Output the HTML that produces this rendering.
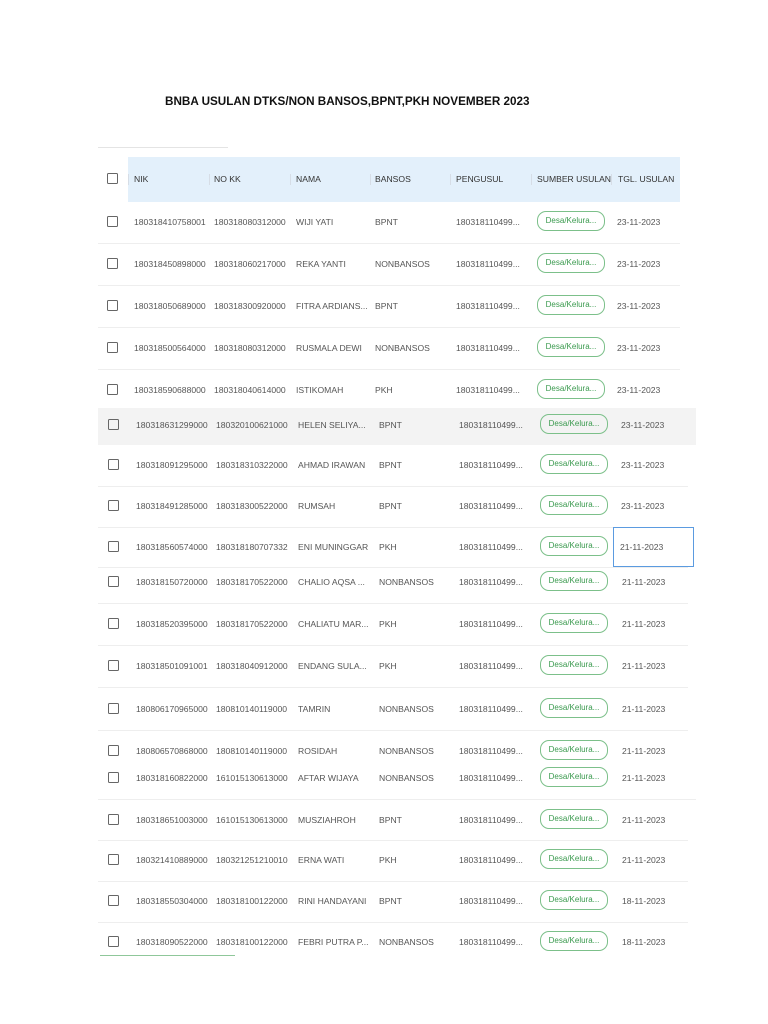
<!DOCTYPE html>
<html><head><meta charset="utf-8"><style>
body{margin:0;width:768px;height:1024px;background:#fff;position:relative;font-family:"Liberation Sans",sans-serif;overflow:hidden}
.t{position:absolute;left:165px;top:95px;font-size:11.7px;font-weight:bold;color:#111}
.hd{position:absolute;left:128px;top:157px;width:552px;height:45px;background:#e3f0fb}
.r{position:absolute;left:0;width:768px;height:16px;font-size:8.6px;color:#555;line-height:16px}
.r span{position:absolute;top:0;white-space:nowrap;overflow:hidden}
.cb{position:absolute;top:2px;width:9px;height:9px;border:1.5px solid #666;border-radius:1.5px}
.p{position:absolute;top:-3px;height:18px;width:66px;border:1px solid #7cc08a;border-radius:9px;color:#3a9a4e;text-align:center;line-height:18px;font-size:8px}
.ln{position:absolute;height:1px;background:#eee}
.h span{color:#333;font-size:8.6px}
.sep{position:absolute;top:3px;width:1px;height:11px;background:#d6dde6}
</style></head><body>
<div class="t">BNBA USULAN DTKS/NON BANSOS,BPNT,PKH NOVEMBER 2023</div>
<div class="ln" style="left:98px;top:147px;width:130px;background:#e4e4e4"></div>
<div class="hd"></div>
<div class="r h" style="top:171px"><div class="cb" style="left:107px"></div>
<div class="sep" style="left:128px"></div><span style="left:134px">NIK</span>
<div class="sep" style="left:209px"></div><span style="left:214px">NO KK</span>
<div class="sep" style="left:290px"></div><span style="left:296px">NAMA</span>
<div class="sep" style="left:370px"></div><span style="left:375px">BANSOS</span>
<div class="sep" style="left:450px"></div><span style="left:456px">PENGUSUL</span>
<div class="sep" style="left:531px"></div><span style="left:537px">SUMBER USULAN</span>
<div class="sep" style="left:611px"></div><span style="left:618px">TGL. USULAN</span></div>
<div class="ln" style="left:98px;top:243px;width:582px"></div>
<div class="ln" style="left:98px;top:285px;width:582px"></div>
<div class="ln" style="left:98px;top:327px;width:582px"></div>
<div class="ln" style="left:98px;top:369px;width:582px"></div>
<div style="position:absolute;left:98px;top:408px;width:598px;height:37px;background:#f3f3f3"></div>
<div class="ln" style="left:98px;top:486px;width:590px"></div>
<div class="ln" style="left:98px;top:527px;width:590px"></div>
<div class="ln" style="left:98px;top:567px;width:590px"></div>
<div class="ln" style="left:98px;top:603px;width:590px"></div>
<div class="ln" style="left:98px;top:645px;width:590px"></div>
<div class="ln" style="left:98px;top:687px;width:590px"></div>
<div class="ln" style="left:98px;top:730px;width:590px"></div>
<div class="ln" style="left:98px;top:799px;width:598px"></div>
<div class="ln" style="left:98px;top:840px;width:590px"></div>
<div class="ln" style="left:98px;top:881px;width:590px"></div>
<div class="ln" style="left:98px;top:922px;width:590px"></div>
<div style="position:absolute;left:613px;top:527px;width:81px;height:40px;border:1px solid #5b9be0;box-sizing:border-box"></div>
<div class="ln" style="left:100px;top:955px;width:135px;background:#8fc79a"></div>

<div class="r" style="top:214px"><div class="cb" style="left:107px"></div><span style="left:134px;width:76px">180318410758001</span><span style="left:214px;width:78px">180318080312000</span><span style="left:296px">WIJI YATI</span><span style="left:375px">BPNT</span><span style="left:456px">180318110499...</span><div class="p" style="left:537px">Desa/Kelura...</div><span style="left:617px">23-11-2023</span></div>
<div class="r" style="top:256px"><div class="cb" style="left:107px"></div><span style="left:134px;width:76px">180318450898000</span><span style="left:214px;width:78px">180318060217000</span><span style="left:296px">REKA YANTI</span><span style="left:375px">NONBANSOS</span><span style="left:456px">180318110499...</span><div class="p" style="left:537px">Desa/Kelura...</div><span style="left:617px">23-11-2023</span></div>
<div class="r" style="top:298px"><div class="cb" style="left:107px"></div><span style="left:134px;width:76px">180318050689000</span><span style="left:214px;width:78px">180318300920000</span><span style="left:296px">FITRA ARDIANS...</span><span style="left:375px">BPNT</span><span style="left:456px">180318110499...</span><div class="p" style="left:537px">Desa/Kelura...</div><span style="left:617px">23-11-2023</span></div>
<div class="r" style="top:340px"><div class="cb" style="left:107px"></div><span style="left:134px;width:76px">180318500564000</span><span style="left:214px;width:78px">180318080312000</span><span style="left:296px">RUSMALA DEWI</span><span style="left:375px">NONBANSOS</span><span style="left:456px">180318110499...</span><div class="p" style="left:537px">Desa/Kelura...</div><span style="left:617px">23-11-2023</span></div>
<div class="r" style="top:382px"><div class="cb" style="left:107px"></div><span style="left:134px;width:76px">180318590688000</span><span style="left:214px;width:78px">180318040614000</span><span style="left:296px">ISTIKOMAH</span><span style="left:375px">PKH</span><span style="left:456px">180318110499...</span><div class="p" style="left:537px">Desa/Kelura...</div><span style="left:617px">23-11-2023</span></div>

<div class="r" style="top:417px"><div class="cb" style="left:108px"></div><span style="left:136px;width:76px">180318631299000</span><span style="left:216px;width:78px">180320100621000</span><span style="left:298px">HELEN SELIYA...</span><span style="left:379px">BPNT</span><span style="left:459px">180318110499...</span><div class="p" style="left:540px">Desa/Kelura...</div><span style="left:621px">23-11-2023</span></div>
<div class="r" style="top:457px"><div class="cb" style="left:108px"></div><span style="left:136px;width:76px">180318091295000</span><span style="left:216px;width:78px">180318310322000</span><span style="left:298px">AHMAD IRAWAN</span><span style="left:379px">BPNT</span><span style="left:459px">180318110499...</span><div class="p" style="left:540px">Desa/Kelura...</div><span style="left:621px">23-11-2023</span></div>
<div class="r" style="top:498px"><div class="cb" style="left:108px"></div><span style="left:136px;width:76px">180318491285000</span><span style="left:216px;width:78px">180318300522000</span><span style="left:298px">RUMSAH</span><span style="left:379px">BPNT</span><span style="left:459px">180318110499...</span><div class="p" style="left:540px">Desa/Kelura...</div><span style="left:621px">23-11-2023</span></div>
<div class="r" style="top:539px"><div class="cb" style="left:108px"></div><span style="left:136px;width:76px">180318560574000</span><span style="left:216px;width:78px">180318180707332</span><span style="left:298px">ENI MUNINGGAR</span><span style="left:379px">PKH</span><span style="left:459px">180318110499...</span><div class="p" style="left:540px">Desa/Kelura...</div><span style="left:620px">21-11-2023</span></div>
<div class="r" style="top:574px"><div class="cb" style="left:108px"></div><span style="left:136px;width:76px">180318150720000</span><span style="left:216px;width:78px">180318170522000</span><span style="left:298px">CHALIO AQSA ...</span><span style="left:379px">NONBANSOS</span><span style="left:459px">180318110499...</span><div class="p" style="left:540px">Desa/Kelura...</div><span style="left:622px">21-11-2023</span></div>
<div class="r" style="top:616px"><div class="cb" style="left:108px"></div><span style="left:136px;width:76px">180318520395000</span><span style="left:216px;width:78px">180318170522000</span><span style="left:298px">CHALIATU MAR...</span><span style="left:379px">PKH</span><span style="left:459px">180318110499...</span><div class="p" style="left:540px">Desa/Kelura...</div><span style="left:622px">21-11-2023</span></div>
<div class="r" style="top:658px"><div class="cb" style="left:108px"></div><span style="left:136px;width:76px">180318501091001</span><span style="left:216px;width:78px">180318040912000</span><span style="left:298px">ENDANG SULA...</span><span style="left:379px">PKH</span><span style="left:459px">180318110499...</span><div class="p" style="left:540px">Desa/Kelura...</div><span style="left:622px">21-11-2023</span></div>
<div class="r" style="top:701px"><div class="cb" style="left:108px"></div><span style="left:136px;width:76px">180806170965000</span><span style="left:216px;width:78px">180810140119000</span><span style="left:298px">TAMRIN</span><span style="left:379px">NONBANSOS</span><span style="left:459px">180318110499...</span><div class="p" style="left:540px">Desa/Kelura...</div><span style="left:622px">21-11-2023</span></div>
<div class="r" style="top:743px"><div class="cb" style="left:108px"></div><span style="left:136px;width:76px">180806570868000</span><span style="left:216px;width:78px">180810140119000</span><span style="left:298px">ROSIDAH</span><span style="left:379px">NONBANSOS</span><span style="left:459px">180318110499...</span><div class="p" style="left:540px">Desa/Kelura...</div><span style="left:622px">21-11-2023</span></div>
<div class="r" style="top:770px"><div class="cb" style="left:108px"></div><span style="left:136px;width:76px">180318160822000</span><span style="left:216px;width:78px">161015130613000</span><span style="left:298px">AFTAR WIJAYA</span><span style="left:379px">NONBANSOS</span><span style="left:459px">180318110499...</span><div class="p" style="left:540px">Desa/Kelura...</div><span style="left:622px">21-11-2023</span></div>
<div class="r" style="top:812px"><div class="cb" style="left:108px"></div><span style="left:136px;width:76px">180318651003000</span><span style="left:216px;width:78px">161015130613000</span><span style="left:298px">MUSZIAHROH</span><span style="left:379px">BPNT</span><span style="left:459px">180318110499...</span><div class="p" style="left:540px">Desa/Kelura...</div><span style="left:622px">21-11-2023</span></div>
<div class="r" style="top:852px"><div class="cb" style="left:108px"></div><span style="left:136px;width:76px">180321410889000</span><span style="left:216px;width:78px">180321251210010</span><span style="left:298px">ERNA WATI</span><span style="left:379px">PKH</span><span style="left:459px">180318110499...</span><div class="p" style="left:540px">Desa/Kelura...</div><span style="left:622px">21-11-2023</span></div>
<div class="r" style="top:893px"><div class="cb" style="left:108px"></div><span style="left:136px;width:76px">180318550304000</span><span style="left:216px;width:78px">180318100122000</span><span style="left:298px">RINI HANDAYANI</span><span style="left:379px">BPNT</span><span style="left:459px">180318110499...</span><div class="p" style="left:540px">Desa/Kelura...</div><span style="left:622px">18-11-2023</span></div>
<div class="r" style="top:934px"><div class="cb" style="left:108px"></div><span style="left:136px;width:76px">180318090522000</span><span style="left:216px;width:78px">180318100122000</span><span style="left:298px">FEBRI PUTRA P...</span><span style="left:379px">NONBANSOS</span><span style="left:459px">180318110499...</span><div class="p" style="left:540px">Desa/Kelura...</div><span style="left:622px">18-11-2023</span></div>
</body></html>
